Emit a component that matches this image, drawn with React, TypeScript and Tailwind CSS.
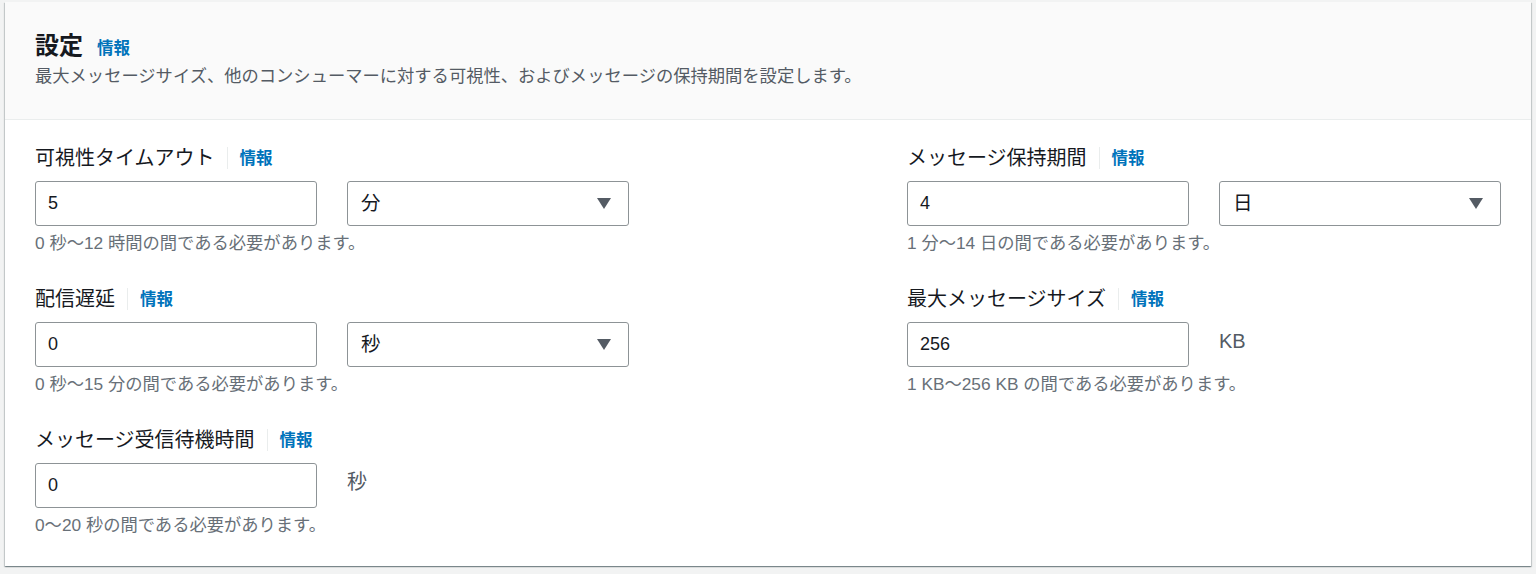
import React from 'react'

const font = { fontFamily: '"Liberation Sans", "Noto Sans CJK JP", sans-serif' }

function InfoLink({ className = '' }: { className?: string }) {
  return <a className={`text-[#0073bb] font-bold text-[16.5px] cursor-pointer ${className}`}>情報</a>
}

function FieldLabel({ label }: { label: string }) {
  return (
    <div className="flex items-center h-[26px]">
      <span className="text-[20px] text-[#16191f] leading-[26px]">{label}</span>
      <span className="mx-[12px] w-px h-[22px] bg-[#eaeded]" />
      <InfoLink />
    </div>
  )
}

function TextInput({ value }: { value: string }) {
  return (
    <div className="w-[282px] h-[45px] border border-[#8d9396] rounded-[3px] bg-white flex items-center px-[12px] text-[18px] text-[#16191f]">
      {value}
    </div>
  )
}

function Select({ value }: { value: string }) {
  return (
    <div className="w-[282px] h-[45px] border border-[#8d9396] rounded-[3px] bg-white flex items-center justify-between pl-[13px] pr-[17px] text-[19.5px] text-[#16191f]">
      <span>{value}</span>
      <svg width="14" height="11" viewBox="0 0 14 11">
        <path d="M0 0 H14 L7 11 Z" fill="#545b64" />
      </svg>
    </div>
  )
}

function Field({
  label,
  value,
  unit,
  select,
  hint,
}: {
  label: string
  value: string
  unit?: string
  select?: string
  hint: string
}) {
  return (
    <div className="flex flex-col">
      <FieldLabel label={label} />
      <div className="flex items-start gap-[30px] mt-[10px]">
        <TextInput value={value} />
        {select && <Select value={select} />}
        {unit && <span className="text-[20px] text-[#545b64] leading-[45px] -mt-[3px]">{unit}</span>}
      </div>
      <p className="text-[17.3px] text-[#687078] leading-[22px] mt-[6px]">{hint}</p>
    </div>
  )
}

export default function App() {
  return (
    <div className="min-h-[574px] bg-[#f2f3f3] pt-[2px] px-[5px] pb-[8px]" style={font}>
      <div className="bg-white shadow-[0_1px_1px_0_rgba(0,28,36,0.3),1px_1px_1px_0_rgba(0,28,36,0.15),-1px_1px_1px_0_rgba(0,28,36,0.15)]">
        {/* Header */}
        <div className="bg-[#fafafa] border-b border-[#eaeded] pt-[29px] pb-[32px] px-[30px]">
          <div className="flex items-baseline gap-[14px]">
            <h2 className="text-[24px] font-bold text-[#16191f] leading-[30px]">設定</h2>
            <InfoLink />
          </div>
          <p className="text-[17.3px] text-[#545b64] leading-[22px] mt-[4px]">
            最大メッセージサイズ、他のコンシューマーに対する可視性、およびメッセージの保持期間を設定します。
          </p>
        </div>

        {/* Body */}
        <div className="grid grid-cols-[594px_594px] justify-between pt-[25px] pb-[30px] px-[30px]">
          <div className="flex flex-col gap-[32px]">
            <Field label="可視性タイムアウト" value="5" select="分" hint="0 秒～12 時間の間である必要があります。" />
            <Field label="配信遅延" value="0" select="秒" hint="0 秒～15 分の間である必要があります。" />
            <Field label="メッセージ受信待機時間" value="0" unit="秒" hint="0～20 秒の間である必要があります。" />
          </div>
          <div className="flex flex-col gap-[32px]">
            <Field label="メッセージ保持期間" value="4" select="日" hint="1 分～14 日の間である必要があります。" />
            <Field label="最大メッセージサイズ" value="256" unit="KB" hint="1 KB～256 KB の間である必要があります。" />
          </div>
        </div>
      </div>
    </div>
  )
}
